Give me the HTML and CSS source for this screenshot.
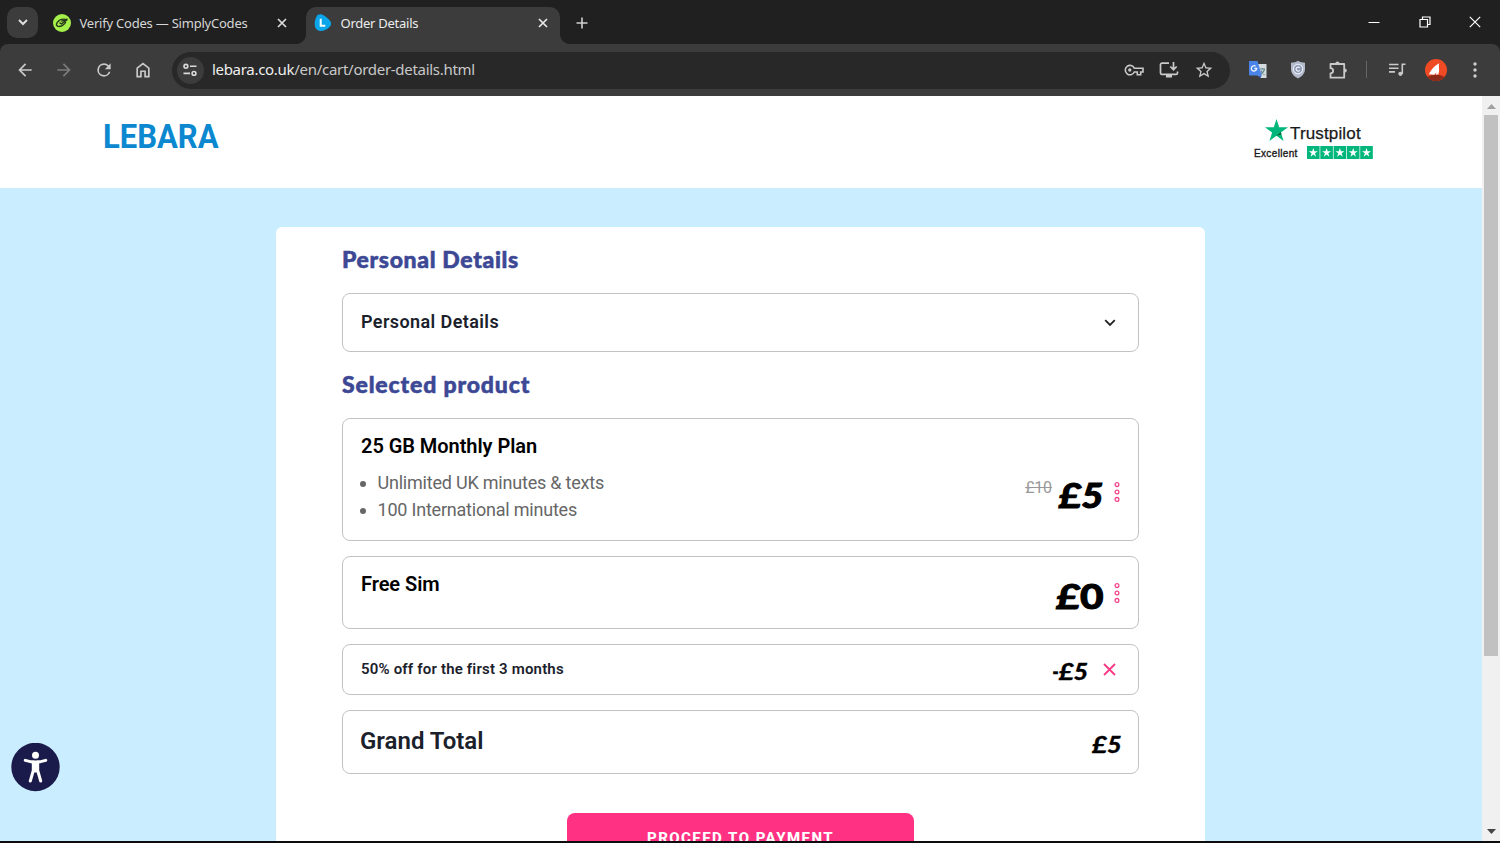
FILE: index.html
```html
<!DOCTYPE html>
<html lang="en">
<head>
<meta charset="utf-8">
<title>Order Details</title>
<link rel="stylesheet" href="styles.css">
</head>
<body>
<div class="browser">
  <div class="tabstrip">
    <div class="tab-search"><svg width="10" height="7" viewBox="0 0 10 7"><path d="M1 1l4 4 4-4" fill="none" stroke="#dedede" stroke-width="2"/></svg></div>
    <div class="tab tab-idle">
      <svg class="favicon" width="18" height="18" viewBox="0 0 18 18"><circle cx="9" cy="9" r="9" fill="#a5f04b"/><path d="M11.800 5.200C9.500 4.700 6 6 4.300 8.300c-1.500 2-.9 3.900 1 4.100 2.700.3 6.200-1.700 7.500-4.400" fill="none" stroke="#26351b" stroke-width="1.400"/><path d="M6.500 8.700l2 1.300 5.700-4.400M8.300 7.300l6.200-2.500" fill="none" stroke="#26351b" stroke-width="1.400"/></svg>
      <span class="tab-title title-codes">Verify Codes — SimplyCodes</span>
      <svg class="tab-close" width="10" height="10" viewBox="0 0 10 10"><path d="M1 1l8 8M9 1L1 9" stroke="#dcdcdc" stroke-width="1.700"/></svg>
    </div>
    <div class="tab tab-active">
      <svg class="favicon" width="18" height="18" viewBox="0 0 18 18"><path d="M8.500.8C6-.2 3.500.6 2.400 2.700 1.200 5.300.4 8 .8 11.300c.4 3.600 2.200 5.500 5.400 5.600 3.600.1 6.200-1 8.900-3.400 2.600-2.400 2.700-5 .5-7.300C13.300 3.800 11 1.800 8.500.8z" fill="#0ba5ea"/><path d="M6.700 4.800v7h4.600" fill="none" stroke="#fff" stroke-width="2"/></svg>
      <span class="tab-title title-order">Order Details</span>
      <svg class="tab-close" width="10" height="10" viewBox="0 0 10 10"><path d="M1 1l8 8M9 1L1 9" stroke="#e8e8e8" stroke-width="1.700"/></svg>
    </div>
    <svg class="new-tab" width="12" height="12" viewBox="0 0 12 12"><path d="M6 .5v11M.5 6h11" stroke="#d0d0d0" stroke-width="1.600"/></svg>
    <div class="window-buttons">
      <svg width="12" height="12" viewBox="0 0 12 12"><path d="M.5 6.500h11" stroke="#fff" stroke-width="1"/></svg>
      <svg width="12" height="12" viewBox="0 0 12 12" fill="none" stroke="#fff" stroke-width="1.200"><path d="M1 3.500h7.500V11H1zM3.500 3.500V1H11v7.500H8.500"/></svg>
      <svg width="12" height="12" viewBox="0 0 12 12"><path d="M.8.800l10.400 10.400M11.200.800L.8 11.200" stroke="#fff" stroke-width="1.200"/></svg>
    </div>
  </div>

  <div class="toolbar">
    <div class="nav-buttons">
      <svg width="20" height="20" viewBox="0 0 24 24" fill="#c9c9c9"><path d="M20 11H7.830l5.590-5.590L12 4l-8 8 8 8 1.410-1.410L7.830 13H20z"/></svg>
      <svg width="20" height="20" viewBox="0 0 24 24" fill="#7b7b7b"><path d="M12 4l-1.410 1.410L16.170 11H4v2h12.170l-5.580 5.590L12 20l8-8z"/></svg>
      <svg width="20" height="20" viewBox="0 0 24 24" fill="#c9c9c9"><path d="M17.650 6.350A7.960 7.960 0 0 0 12 4a8 8 0 1 0 7.730 10h-2.080A6 6 0 1 1 12 6c1.660 0 3.140.69 4.220 1.780L13 11h7V4z"/></svg>
      <svg width="20" height="20" viewBox="0 0 24 24" fill="none" stroke="#c9c9c9" stroke-width="2"><path d="M5 9.700L12 4.300l7 5.400V20h-4.500v-6.500h-5V20H5z"/></svg>
    </div>
    <div class="address">
      <div class="site-info"><svg width="14" height="14" viewBox="0 0 14 14" fill="none" stroke="#dadada" stroke-width="1.600"><circle cx="2.900" cy="3.300" r="1.900"/><path d="M7 3.300h6.500M.5 10.400H7"/><circle cx="11" cy="10.400" r="1.900"/></svg></div>
      <span class="url"><span class="host">lebara.co.uk</span>/en/cart/order-details.html</span>
      <div class="address-actions">
        <svg width="20" height="14" viewBox="0 0 20 14" fill="none" stroke="#c9c9c9" stroke-width="1.600"><path d="M10.300 5.200a4.700 4.700 0 1 0 0 3.800h3v2.700h3.400V9H19V5.200z"/><circle cx="5.800" cy="7" r="1.700" fill="#c9c9c9" stroke="none"/></svg>
        <svg width="20" height="18" viewBox="0 0 20 18" fill="none" stroke="#c9c9c9" stroke-width="1.700"><path d="M10 2.200H3a1.500 1.500 0 0 0-1.500 1.500v8.200A1.500 1.500 0 0 0 3 13.400h14a1.500 1.500 0 0 0 1.500-1.500v-1.500M14.500 1v7.500M11.300 5.500l3.200 3.200 3.200-3.200"/><path d="M7 13.400h6v3.100H7z" fill="#c9c9c9" stroke="none"/></svg>
        <svg width="20" height="20" viewBox="0 0 24 24" fill="#c9c9c9"><path d="M22 9.240l-7.190-.62L12 2 9.190 8.630 2 9.240l5.460 4.730L5.820 21 12 17.270 18.180 21l-1.630-7.030zM12 15.400l-3.760 2.270 1-4.280-3.320-2.880 4.380-.38L12 6.100l1.710 4.040 4.380.38-3.320 2.880 1 4.280z"/></svg>
      </div>
    </div>
    <div class="extensions">
      <svg width="20" height="20" viewBox="0 0 20 20"><path d="M8 4h10.500v14H13L8 14z" fill="#d5dbdd"/><path d="M12 9h5M14.500 8v1.500M16.500 9.500c-1 3-2.500 4-4 5M13 10.500c.5 2 2 3.500 3.500 4.300" fill="none" stroke="#648792" stroke-width="1.200"/><path d="M1 1h8.500l4.200 14.500H2A1 1 0 0 1 1 14.500z" fill="#4b84e8"/><path d="M9.800 15.500h3.900L12 18.300z" fill="#2c5bc0"/><path d="M7.600 6.200A2.700 2.700 0 1 0 8.700 8.500H6.400" fill="none" stroke="#eef4ff" stroke-width="1.300"/></svg>
      <svg width="16" height="19" viewBox="0 0 16 19"><path d="M8 .8C5.500 2.200 3.500 2.700 1 2.800V9c0 4.300 2.800 7.400 7 9.400 4.200-2 7-5.100 7-9.400V2.800C12.500 2.700 10.500 2.200 8 .8z" fill="#b3bacb"/><circle cx="8" cy="9" r="4.600" fill="#8f9ab7" stroke="#e6eaf4" stroke-width="1.300"/><path d="M9.700 7.900a2 2 0 1 0 0 2.400" fill="none" stroke="#f1f3fa" stroke-width="1.200"/></svg>
      <svg width="20" height="20" viewBox="0 0 20 20" fill="none" stroke="#c9c9c9" stroke-width="1.800"><path d="M2.500 4h13.700v13.700H2.500v-4.200c3.500-.3 3.500-5 0-5.300z" stroke-linejoin="round"/><path d="M7.300 3.500a2.100 2.100 0 0 1 4.200 0zM16.700 8.500a2.100 2.100 0 0 1 0 4.200z" fill="#c9c9c9" stroke="none"/></svg>
      <span class="divider"></span>
      <svg width="18" height="16" viewBox="0 0 18 16" fill="none" stroke="#c9c9c9" stroke-width="1.600"><path d="M1 2.500h9.500M1 6.200h9.500M1 9.900h6M17.500 2.300h-3.200V12"/><circle cx="12.400" cy="11.800" r="2.100" fill="#c9c9c9" stroke="none"/></svg>
      <svg width="22" height="22" viewBox="0 0 22 22"><circle cx="11" cy="11" r="11" fill="#f04a25"/><path d="M2.500 18c4.500-3 12.500-3 17 0a11 11 0 0 1-17 0z" fill="#8e2a19"/><path d="M3.800 15.300C6.500 10.500 9.500 6.300 14.200 4.300c-1 3.500.9 7-.9 11l-2.300.5.300-2.300-2 2.300z" fill="#fff"/></svg>
      <svg width="4" height="18" viewBox="0 0 4 18" fill="#cecece"><circle cx="2" cy="3" r="1.700"/><circle cx="2" cy="9" r="1.700"/><circle cx="2" cy="15" r="1.700"/></svg>
    </div>
  </div>

  <div class="viewport">
    <div class="page">
      <header class="site-header">
        <div class="logo">LEBARA</div>
        <div class="trustpilot">
          <div class="tp-brand"><svg width="23" height="22" viewBox="0 0 24 23"><path d="M12 0l2.830 8.700H24l-7.400 5.400L19.400 23 12 17.400 4.600 23l2.800-8.900L0 8.700h9.170z" fill="#00b67a"/><path d="M17.200 16l-.7-2.100-4.500 3.500z" fill="#005128"/></svg><span>Trustpilot</span></div>
          <div class="tp-rating"><span>Excellent</span>
            <svg width="66" height="13" viewBox="0 0 66 13"><defs><g id="star"><path d="M0 0h12.600v13H0z" fill="#00b67a"/><path d="M6.300 2l1.050 3.300h3.450L8 7.300l1.050 3.400L6.300 8.600l-2.750 2.100L4.600 7.300 1.800 5.300h3.450z" fill="#fff"/></g></defs><use href="#star"/><use href="#star" x="13.300"/><use href="#star" x="26.600"/><use href="#star" x="39.900"/><use href="#star" x="53.200"/></svg>
          </div>
        </div>
      </header>
      <main class="order">
        <h2 class="h-personal">Personal Details</h2>
        <section class="box accordion"><span>Personal Details</span><svg width="12" height="8" viewBox="0 0 12 8"><path d="M1.200 1.200L6 6l4.800-4.800" fill="none" stroke="#222" stroke-width="1.800"/></svg></section>
        <h2 class="h-product">Selected product</h2>
        <section class="box plan">
          <div><h3>25 GB Monthly Plan</h3>
            <ul><li>Unlimited UK minutes &amp; texts</li><li>100 International minutes</li></ul></div>
          <div class="plan-price"><s>£10</s><span class="price big"><i>£5</i></span><svg class="dots" width="6" height="20" viewBox="0 0 6 20" fill="none" stroke="#f1468c" stroke-width="1.300"><circle cx="3" cy="2.600" r="1.900"/><circle cx="3" cy="10" r="1.900"/><circle cx="3" cy="17.400" r="1.900"/></svg></div>
        </section>
        <section class="box sim">
          <h3>Free Sim</h3>
          <div class="sim-price"><span class="price big zero"><i>£</i>0</span><svg class="dots" width="6" height="20" viewBox="0 0 6 20" fill="none" stroke="#f1468c" stroke-width="1.300"><circle cx="3" cy="2.600" r="1.900"/><circle cx="3" cy="10" r="1.900"/><circle cx="3" cy="17.400" r="1.900"/></svg></div>
        </section>
        <section class="box discount">
          <span class="offer">50% off for the first 3 months</span>
          <div class="discount-price"><span class="price"><span class="minus">-</span><i>£5</i></span><svg width="13" height="13" viewBox="0 0 13 13"><path d="M1 1l11 11M12 1L1 12" stroke="#f93a84" stroke-width="1.800"/></svg></div>
        </section>
        <section class="box total"><strong>Grand Total</strong><span class="price"><i>£5</i></span></section>
        <button class="pay">PROCEED TO PAYMENT</button>
      </main>
      <div class="a11y"><svg width="49" height="49" viewBox="0 0 49 49"><circle cx="24.500" cy="24" r="24.200" fill="#1b1b4b"/><circle cx="24.500" cy="12.300" r="3.500" fill="#fff"/><path d="M14.300 17.300c6.500 2.200 13.900 2.200 20.400 0" fill="none" stroke="#fff" stroke-width="3" stroke-linecap="round"/><path d="M22.300 19v8.500L19.300 38M26.700 19v8.500l3 10.500" fill="none" stroke="#fff" stroke-width="3" stroke-linecap="round"/><path d="M21 18h7v9.500l-2 2h-3l-2-2z" fill="#fff"/></svg></div>
    </div>
    <div class="scrollbar">
      <svg width="9" height="5" viewBox="0 0 9 5"><path d="M0 5l4.500-5L9 5z" fill="#a0a0a0"/></svg>
      <div class="thumb"></div>
      <svg class="down" width="9" height="5" viewBox="0 0 9 5"><path d="M0 0l4.500 5L9 0z" fill="#444"/></svg>
    </div>
  </div>
</div>
</body>
</html>
```
FILE: styles.css
```css
* { box-sizing: border-box; }
body { margin: 0; background: #0c0c0c; font-family: Roboto, sans-serif; }
svg { display: block; flex: none; }
h2, h3, ul { margin: 0; }

.browser { height: 843px; overflow: hidden; display: flex; flex-direction: column; padding-bottom: 2px; background: linear-gradient(#202020 60px, #0c0c0c 60px); }
.tabstrip { height: 44px; flex: none; background: #202020; display: flex; align-items: flex-start; }
.tab-search { width: 31px; height: 31px; margin: 7px 0 0 7px; border-radius: 10px; background: #3c3c3c; display: flex; align-items: center; justify-content: center; }
.tab { display: flex; align-items: center; white-space: nowrap; font-family: "Noto Sans", sans-serif; font-size: 13px; color: #d6d6d6; }
.tab-idle { width: 268px; height: 32px; margin-top: 7px; padding: 0 19px 0 15px; }
.tab-active { position: relative; width: 254px; height: 37px; margin-top: 7px; padding: 0 12px 5px 8px; border-radius: 10px 10px 0 0; background: #3c3c3c; color: #ececec; }
.tab-active::before, .tab-active::after { content: ""; position: absolute; bottom: 0; width: 10px; height: 10px; }
.tab-active::before { left: -10px; background: radial-gradient(circle at 0 0, #202020 9.500px, #3c3c3c 10.500px); }
.tab-active::after { right: -10px; background: radial-gradient(circle at 100% 0, #202020 9.500px, #3c3c3c 10.500px); }
.tab-title { margin-left: 8.500px; }
.title-codes { letter-spacing: -.22px; }
.title-order { letter-spacing: -.26px; }
.tab-close { margin-left: auto; }
.new-tab { margin: 17px 0 0 16px; }
.window-buttons { margin: 16px 19px 0 auto; display: flex; gap: 38.500px; }

.toolbar { height: 52px; flex: none; background: #3c3c3c; border-radius: 8px 8px 0 0; display: flex; align-items: center; }
.nav-buttons { display: flex; gap: 19.300px; margin-left: 15px; }
.address { width: 1058px; height: 37px; margin-left: 19px; border-radius: 19px; background: #282828; display: flex; align-items: center; padding: 0 16px 0 5px; }
.site-info { width: 27px; height: 27px; border-radius: 50%; background: #3c3c3c; display: flex; align-items: center; justify-content: center; }
.url { margin: -2px 0 0 8px; font-family: "Noto Sans", sans-serif; font-size: 15px; letter-spacing: -.29px; color: #c8c8c8; white-space: nowrap; }
.host { color: #eee; }
.address-actions { margin: -1px 0 0 auto; display: flex; align-items: center; gap: 15px; }
.extensions { display: flex; align-items: center; margin: -1px 0 0 18.500px; }
.extensions svg:nth-child(2) { margin-left: 21.500px; }
.extensions svg:nth-child(3) { margin-left: 22.500px; }
.divider { width: 1px; height: 17px; margin-left: 18px; background: #666; }
.extensions svg:nth-child(5) { margin-left: 21px; }
.extensions svg:nth-child(6) { margin-left: 19px; }
.extensions svg:nth-child(7) { margin-left: 26px; }

.viewport { flex: 1; min-height: 0; display: flex; }
.page { position: relative; width: 1482px; overflow: hidden; background: #caeeff; }
.site-header { height: 92px; background: #fff; display: flex; justify-content: space-between; align-items: flex-start; padding: 23px 109px 0 103px; }
.logo { font: 700 34px/34px Roboto, sans-serif; color: #0b88cf; transform: scaleX(.912); transform-origin: 0 0; }
.trustpilot { width: 119px; font-family: "Liberation Sans", sans-serif; color: #191919; }
.tp-brand { display: flex; margin-left: 11px; height: 26px; font-size: 17px; line-height: 29px; letter-spacing: .15px; -webkit-text-stroke: .25px; }
.tp-brand span { margin-left: 2px; }
.tp-rating { display: flex; justify-content: space-between; margin-top: 1px; font-size: 10px; line-height: 15px; letter-spacing: .35px; -webkit-text-stroke: .35px; white-space: nowrap; }

.order { width: 929px; height: 700px; margin: 39px 0 0 276px; padding: 16px 66px 0; border-radius: 6px 6px 0 0; background: #fff; display: flex; flex-direction: column; }
.order h2 { font: 900 23px/32px Lato, sans-serif; letter-spacing: .65px; -webkit-text-stroke: .55px; color: #3d4895; white-space: nowrap; }
.order .h-product { margin-top: 16px; letter-spacing: .85px; }
.box { border: 1px solid #c3c3c3; border-radius: 8px; display: flex; justify-content: space-between; width: 797px; flex: none; padding-left: 18px; }
.accordion { height: 59px; margin-top: 18px; align-items: center; padding-right: 22px; font-size: 18px; font-weight: 600; color: #1b212b; letter-spacing: .4px; }
.accordion span { margin-top: -2px; }
.plan { height: 123px; margin-top: 18px; padding-top: 14px; }
.box h3 { font-size: 20px; line-height: 26px; font-weight: 600; color: #000; letter-spacing: -.05px; }
.plan ul { margin-top: 11px; padding-left: 16.500px; font-size: 18px; line-height: 26.500px; color: #666; letter-spacing: -.21px; }
.price { font-family: Lato, sans-serif; font-weight: 900; font-size: 23px; line-height: 28px; color: #000; white-space: nowrap; transform: scaleX(1.1); transform-origin: 100% 0; -webkit-text-stroke: .3px; }
.big { font-size: 35px; line-height: 40px; -webkit-text-stroke: .9px; }
.zero { transform: scaleX(1.16); }
.plan-price { display: flex; align-items: flex-start; padding: 41px 18px 0 0; }
.plan-price s { font-size: 16px; line-height: 24px; color: #999; margin: 2px 11px 0 0; letter-spacing: -.2px; }
.dots { margin: 7.500px 0 0 10.500px; }
.sim { height: 73px; margin-top: 15px; padding: 14px 18px 0; }
.sim-price { display: flex; margin-top: 4px; }
.discount { height: 51px; margin-top: 15px; align-items: center; padding-right: 22px; }
.discount .price { margin-top: 2px; }
.minus { display: inline-block; transform: scaleX(.7); transform-origin: 100% 50%; }
.offer { font-size: 15px; font-weight: 600; color: #1b212b; letter-spacing: .18px; margin-top: -1px; }
.discount-price { display: flex; align-items: center; gap: 15px; }
.total { height: 64px; margin-top: 15px; align-items: center; padding: 0 16px 0 17px; }
.total strong { font-size: 24px; font-weight: 600; color: #1b212b; margin-top: -2px; }
.total .price { margin-top: 3px; }
.pay { flex: none; width: 347px; height: 50px; margin: 39px 0 0 225px; border: 0; border-radius: 8px; background: #ff3183; color: #fff; font: 800 15px/20px Roboto, sans-serif; letter-spacing: 1.450px; padding: 0; }
.a11y { position: absolute; left: 11px; top: 647px; }

.scrollbar { width: 18px; background: #f0f0f0; display: flex; flex-direction: column; align-items: center; padding: 8px 0 7px; }
.thumb { width: 14px; height: 541px; margin-top: 6px; background: #c1c1c1; }
.down { margin-top: auto; }
```
